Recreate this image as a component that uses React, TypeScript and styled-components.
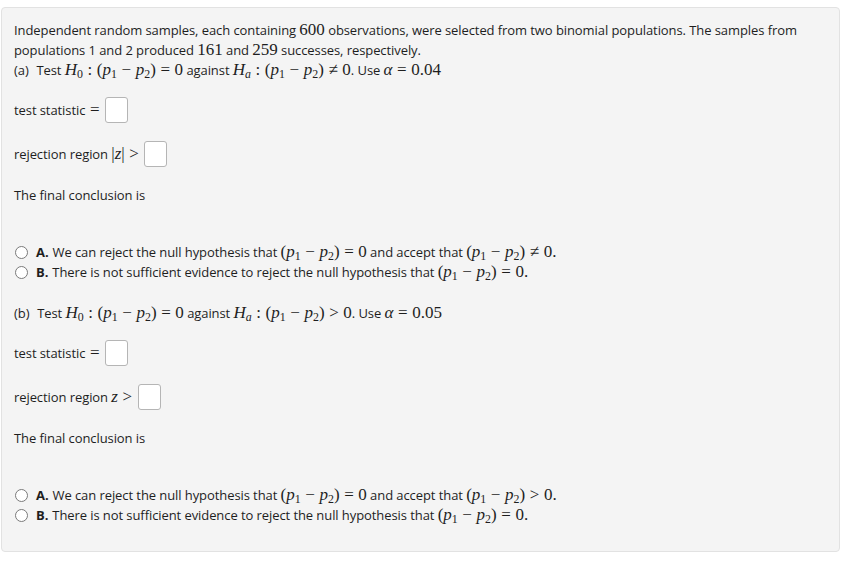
import React from "react";
import styled, { createGlobalStyle } from "styled-components";

const Global = createGlobalStyle`
  html, body { margin: 0; padding: 0; background: #ffffff; }
  body { font-family: "Segoe UI", "Open Sans", sans-serif; color: #1e1e1e; }
`;

const Page = styled.div`
  padding: 7px 12px 13px 1px;
`;

const Panel = styled.div`
  width: 839px;
  box-sizing: border-box;
  background: #f4f4f4;
  border: 1px solid #e2e2e2;
  border-radius: 4px;
  padding: 12px 12px 26px 12px;
  font-size: 13px;
  line-height: 20px;
  letter-spacing: -0.08px;
`;

const Para = styled.div<{ $mt?: number }>`
  margin-top: ${(p) => p.$mt ?? 0}px;
`;

const Row = styled.div<{ $mt: number }>`
  margin-top: ${(p) => p.$mt}px;
  display: flex;
  align-items: center;
  height: 26px;
`;

const AnswerBox = styled.span`
  display: inline-block;
  width: 21px;
  height: 24px;
  border: 1px solid #b5b5b5;
  border-radius: 3px;
  background: #fff;
  margin-left: 1px;
`;

const M = styled.span`
  font-family: "Liberation Serif", "DejaVu Serif", serif;
  font-size: 17px;
  letter-spacing: 0;
`;

const I = styled.i`
  font-family: "Liberation Serif", "DejaVu Serif", serif;
  font-style: italic;
`;

const Sub = styled.sub`
  font-size: 0.7em;
  vertical-align: -0.25em;
  line-height: 0;
  font-style: normal;
`;

const Op = styled.span`
  margin: 0 0.27em;
`;

const Label = styled.span`
  margin-right: 0.6em;
`;

const Options = styled.div<{ $mt: number }>`
  margin-top: ${(p) => p.$mt}px;
  display: flex;
  flex-direction: column;
`;

const Option = styled.label`
  display: flex;
  align-items: center;
  height: 20px;
`;

const Radio = styled.span`
  width: 11px;
  height: 11px;
  border: 1px solid #7a7a7a;
  border-radius: 50%;
  background: #fff;
  margin-left: 1px;
  margin-right: 8px;
  flex-shrink: 0;
`;

const Letter = styled.b`
  font-weight: 700;
  margin-right: 4px;
`;

const P12 = () => (
  <M>
    (<I>p</I>
    <Sub>1</Sub>
    <Op>−</Op>
    <I>p</I>
    <Sub>2</Sub>)
  </M>
);

const H = ({ s }: { s: string }) => (
  <M>
    <I>H</I>
    <Sub>{s === "a" ? <I>a</I> : s}</Sub>
    <Op>:</Op>
  </M>
);

const Eq = ({ op, v }: { op: string; v: string }) => (
  <M>
    <Op>{op}</Op>
    {v}
  </M>
);

const Conclusion = ({ mt, acceptOp }: { mt: number; acceptOp: string }) => (
  <Options $mt={mt}>
    <Option>
      <Radio />
      <span>
        <Letter>A.</Letter>We can reject the null hypothesis that <P12 />
        <Eq op="=" v="0" /> and accept that <P12 />
        <Eq op={acceptOp} v="0." />
      </span>
    </Option>
    <Option>
      <Radio />
      <span>
        <Letter>B.</Letter>There is not sufficient evidence to reject the null hypothesis that <P12 />
        <Eq op="=" v="0." />
      </span>
    </Option>
  </Options>
);

export default function App() {
  return (
    <>
      <Global />
      <Page>
        <Panel>
          <Para>
            Independent random samples, each containing <M>600</M> observations, were selected from two
            binomial populations. The samples from populations 1 and 2 produced <M>161</M> and <M>259</M>{" "}
            successes, respectively.
            <br />
            <Label>(a)</Label>Test <H s="0" />
            <P12 />
            <Eq op="=" v="0" /> against <H s="a" />
            <P12 />
            <Eq op="≠" v="0" />. Use{" "}
            <M>
              <I>α</I>
              <Op>=</Op>0.04
            </M>
          </Para>
          <Row $mt={17}>
            test statistic<M><Op>=</Op></M>
            <AnswerBox />
          </Row>
          <Row $mt={18}>
            rejection region&nbsp;
            <M>
              |<I>z</I>|<Op>&gt;</Op>
            </M>
            <AnswerBox />
          </Row>
          <Para $mt={18}>The final conclusion is</Para>
          <Conclusion mt={37} acceptOp="≠" />
          <Para $mt={21}>
            <Label>(b)</Label>Test <H s="0" />
            <P12 />
            <Eq op="=" v="0" /> against <H s="a" />
            <P12 />
            <Eq op="&gt;" v="0" />. Use{" "}
            <M>
              <I>α</I>
              <Op>=</Op>0.05
            </M>
          </Para>
          <Row $mt={17}>
            test statistic<M><Op>=</Op></M>
            <AnswerBox />
          </Row>
          <Row $mt={18}>
            rejection region&nbsp;
            <M>
              <I>z</I>
              <Op>&gt;</Op>
            </M>
            <AnswerBox />
          </Row>
          <Para $mt={18}>The final conclusion is</Para>
          <Conclusion mt={37} acceptOp="&gt;" />
        </Panel>
      </Page>
    </>
  );
}
